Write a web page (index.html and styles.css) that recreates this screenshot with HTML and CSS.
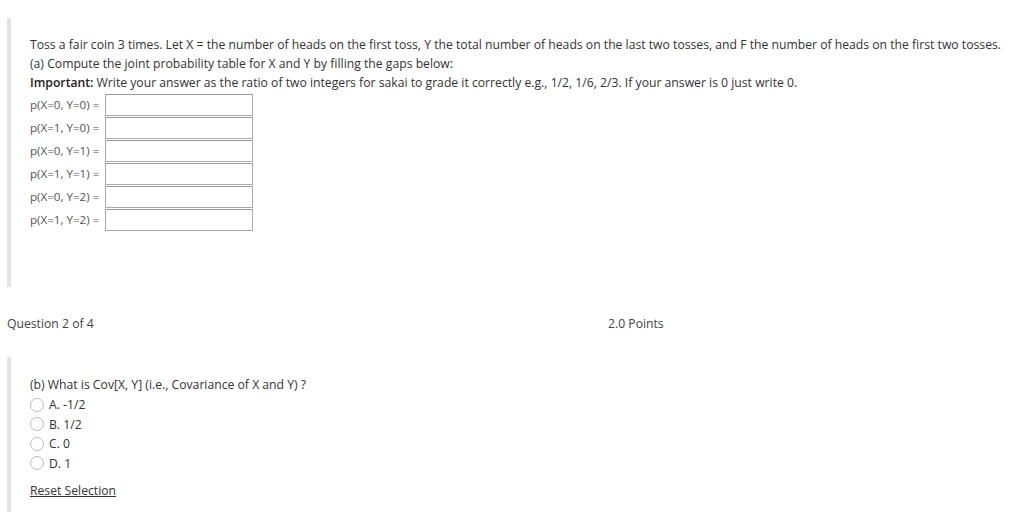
FILE: index.html
```html
<!DOCTYPE html>
<html>
<head>
<meta charset="utf-8">
<link rel="stylesheet" href="styles.css">
</head>
<body>
<div class="qbody first">
  <div class="qtext">
    <div class="line">Toss a fair coin 3 times. Let X = the number of heads on the first toss, Y the total number of heads on the last two tosses, and F the number of heads on the first two tosses.</div>
    <div class="line">(a) Compute the joint probability table for X and Y by filling the gaps below:</div>
    <div class="line"><b>Important:</b> Write your answer as the ratio of two integers for sakai to grade it correctly e.g., 1/2, 1/6, 2/3. If your answer is 0 just write 0.</div>
    <div class="gaps">
      <div class="gap"><span class="lbl">p(X=0, Y=0) =</span><span class="box"></span></div>
      <div class="gap"><span class="lbl">p(X=1, Y=0) =</span><span class="box"></span></div>
      <div class="gap"><span class="lbl">p(X=0, Y=1) =</span><span class="box"></span></div>
      <div class="gap"><span class="lbl">p(X=1, Y=1) =</span><span class="box"></span></div>
      <div class="gap"><span class="lbl">p(X=0, Y=2) =</span><span class="box"></span></div>
      <div class="gap"><span class="lbl">p(X=1, Y=2) =</span><span class="box"></span></div>
    </div>
  </div>
</div>
<div class="qhead">
  <span class="qnum">Question 2 of 4</span>
  <span class="pts">2.0 Points</span>
</div>
<div class="qbody second">
  <div class="qtext">
    <div class="line">(b) What is Cov[X, Y] (i.e., Covariance of X and Y) ?</div>
    <div class="opts">
      <div class="opt"><span class="radio"></span><span>A. -1/2</span></div>
      <div class="opt"><span class="radio"></span><span>B. 1/2</span></div>
      <div class="opt"><span class="radio"></span><span>C. 0</span></div>
      <div class="opt"><span class="radio"></span><span>D. 1</span></div>
    </div>
    <a class="reset" href="#">Reset Selection</a>
  </div>
</div>
</body>
</html>
```
FILE: styles.css
```css
html, body {
  margin: 0;
  padding: 0;
  background: #fff;
}
body {
  font-family: "Open Sans", "DejaVu Sans", sans-serif;
  font-size: 12.2px;
  color: #333;
  padding: 18px 0 0 7px;
  width: 1017px;
  height: 494px;
  overflow: hidden;
}
.qbody {
  border-left: 4px solid #e4e4e4;
  padding-left: 19px;
}
.qbody.first {
  height: 269px;
  padding-top: 17px;
  box-sizing: border-box;
}
.line {
  line-height: 19px;
  white-space: nowrap;
}
.line b {
  font-weight: 600;
  color: #222;
}
.gaps {
  margin-top: 1px;
}
.gap {
  display: flex;
  align-items: center;
  height: 23px;
}
.lbl {
  color: #555;
  font-size: 11.6px;
  width: 75px;
  white-space: nowrap;
}
.box {
  display: block;
  width: 146px;
  height: 20px;
  border: 1px solid #aaa;
  border-top-color: #999;
  background: #fff;
}
.qhead {
  display: flex;
  height: 70px;
  align-items: flex-start;
  padding-top: 28px;
  box-sizing: border-box;
  color: #444;
}
.qnum {
  width: 601px;
}
.qbody.second {
  height: 160px;
  padding-top: 18px;
  box-sizing: border-box;
}
.opts {
  margin-top: 1px;
}
.opt {
  display: flex;
  align-items: center;
  height: 19.5px;
  gap: 5px;
}
.radio {
  display: block;
  width: 12px;
  height: 12px;
  border: 1px solid #bbb;
  border-radius: 50%;
}
.reset {
  display: inline-block;
  margin-top: 9px;
  color: #333;
  text-decoration: underline;
}
```
